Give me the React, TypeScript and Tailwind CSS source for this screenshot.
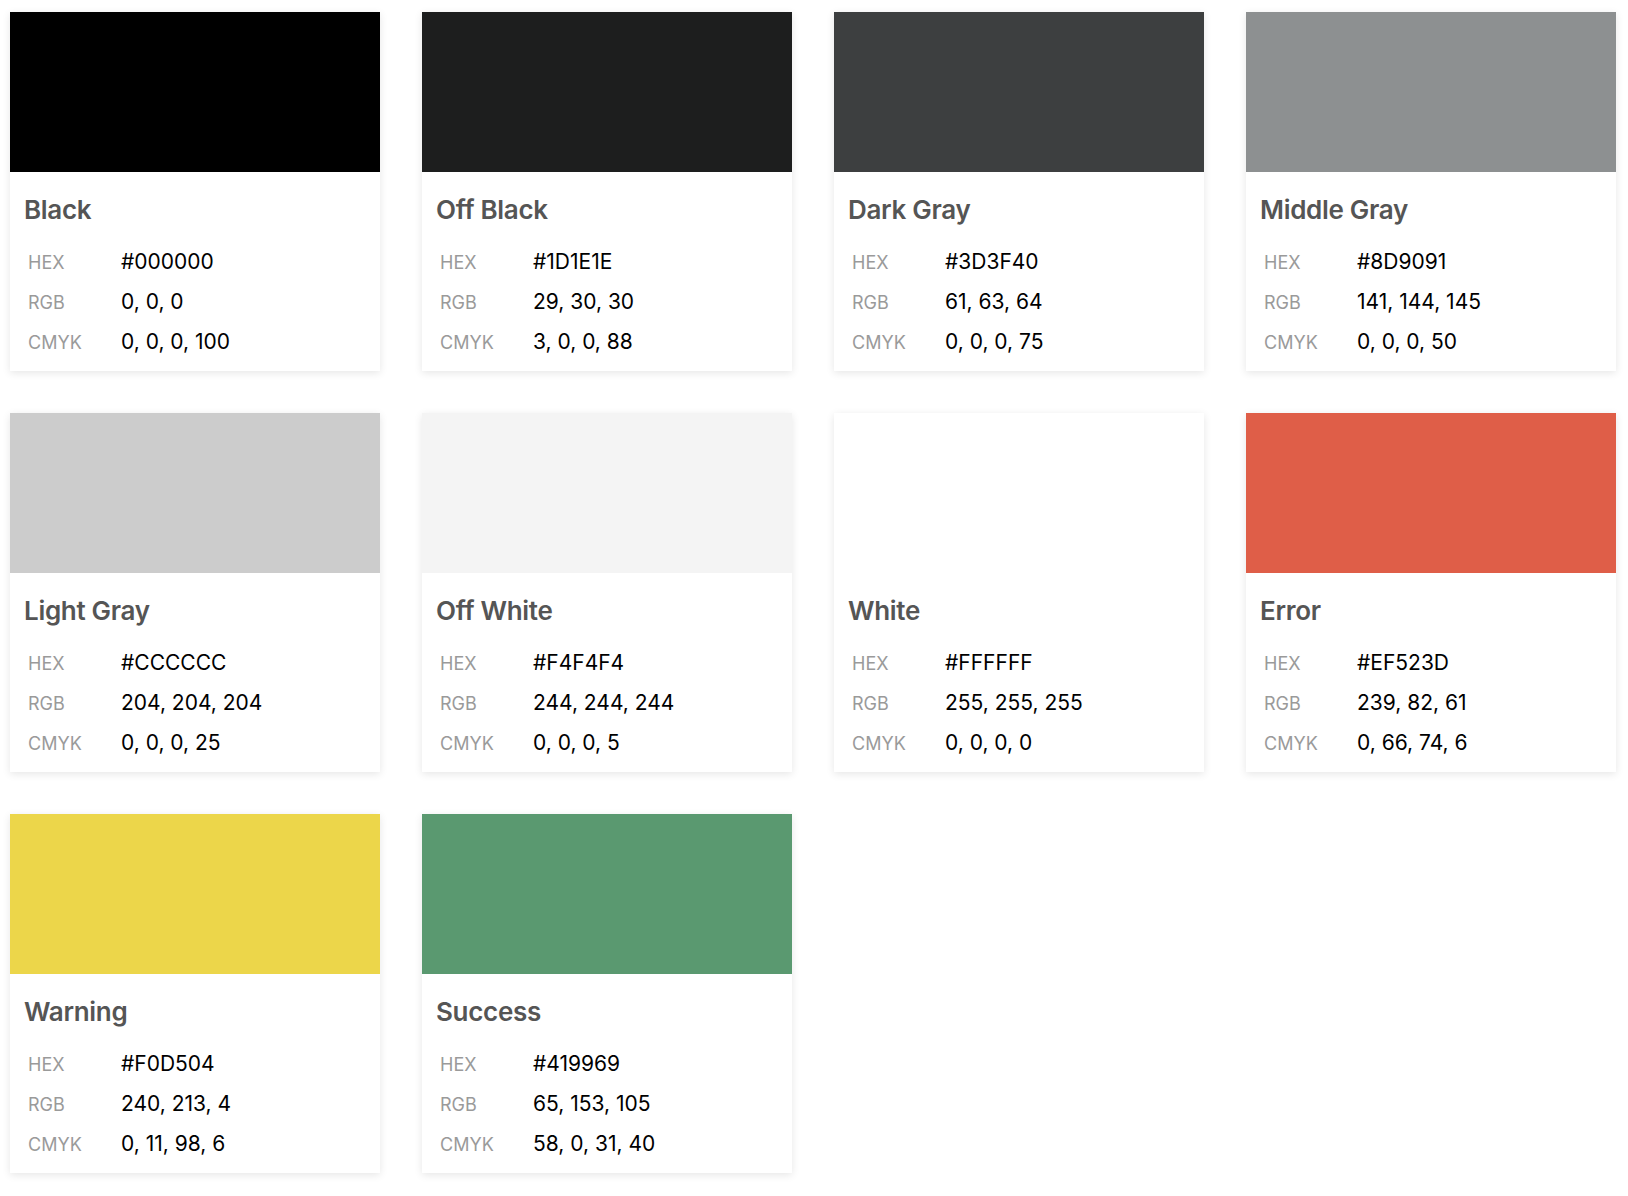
const colors = [
  { name: "Black", bg: "bg-[#000000]", hex: "#000000", rgb: "0, 0, 0", cmyk: "0, 0, 0, 100" },
  { name: "Off Black", bg: "bg-[#1d1e1e]", hex: "#1D1E1E", rgb: "29, 30, 30", cmyk: "3, 0, 0, 88" },
  { name: "Dark Gray", bg: "bg-[#3d3f40]", hex: "#3D3F40", rgb: "61, 63, 64", cmyk: "0, 0, 0, 75" },
  { name: "Middle Gray", bg: "bg-[#8d9091]", hex: "#8D9091", rgb: "141, 144, 145", cmyk: "0, 0, 0, 50" },
  { name: "Light Gray", bg: "bg-[#cccccc]", hex: "#CCCCCC", rgb: "204, 204, 204", cmyk: "0, 0, 0, 25" },
  { name: "Off White", bg: "bg-[#f4f4f4]", hex: "#F4F4F4", rgb: "244, 244, 244", cmyk: "0, 0, 0, 5" },
  { name: "White", bg: "bg-[#ffffff]", hex: "#FFFFFF", rgb: "255, 255, 255", cmyk: "0, 0, 0, 0" },
  { name: "Error", bg: "bg-[#df5e48]", hex: "#EF523D", rgb: "239, 82, 61", cmyk: "0, 66, 74, 6" },
  { name: "Warning", bg: "bg-[#ecd64a]", hex: "#F0D504", rgb: "240, 213, 4", cmyk: "0, 11, 98, 6" },
  { name: "Success", bg: "bg-[#5a9970]", hex: "#419969", rgb: "65, 153, 105", cmyk: "58, 0, 31, 40" },
];

export default function App() {
  return (
    <div className="min-h-[1196px] bg-white pl-[10px] pt-[12px]" style={{ fontFamily: "Inter, 'Open Sans', sans-serif" }}>
      <div className="grid grid-cols-[repeat(4,370px)] gap-x-[42px] gap-y-[42px]">
        {colors.map((c) => (
          <div key={c.name} className="bg-white shadow-[0_2px_8px_rgba(0,0,0,0.10)]">
            <div className={`h-[160px] ${c.bg}`} />
            <div className="px-[14px] pt-[22px] pb-[9px]">
              <div className="text-[26px] leading-[32px] font-semibold text-[#555555] tracking-[-0.3px]">{c.name}</div>
              <div className="mt-[16px]">
                {[["HEX", c.hex], ["RGB", c.rgb], ["CMYK", c.cmyk]].map(([l, v]) => (
                  <div key={l} className="flex h-[40px] items-center">
                    <span className="w-[97px] pl-[4px] text-[18px] text-[#9a9a9a]">{l}</span>
                    <span className="text-[21px] text-black">{v}</span>
                  </div>
                ))}
              </div>
            </div>
          </div>
        ))}
      </div>
    </div>
  );
}
